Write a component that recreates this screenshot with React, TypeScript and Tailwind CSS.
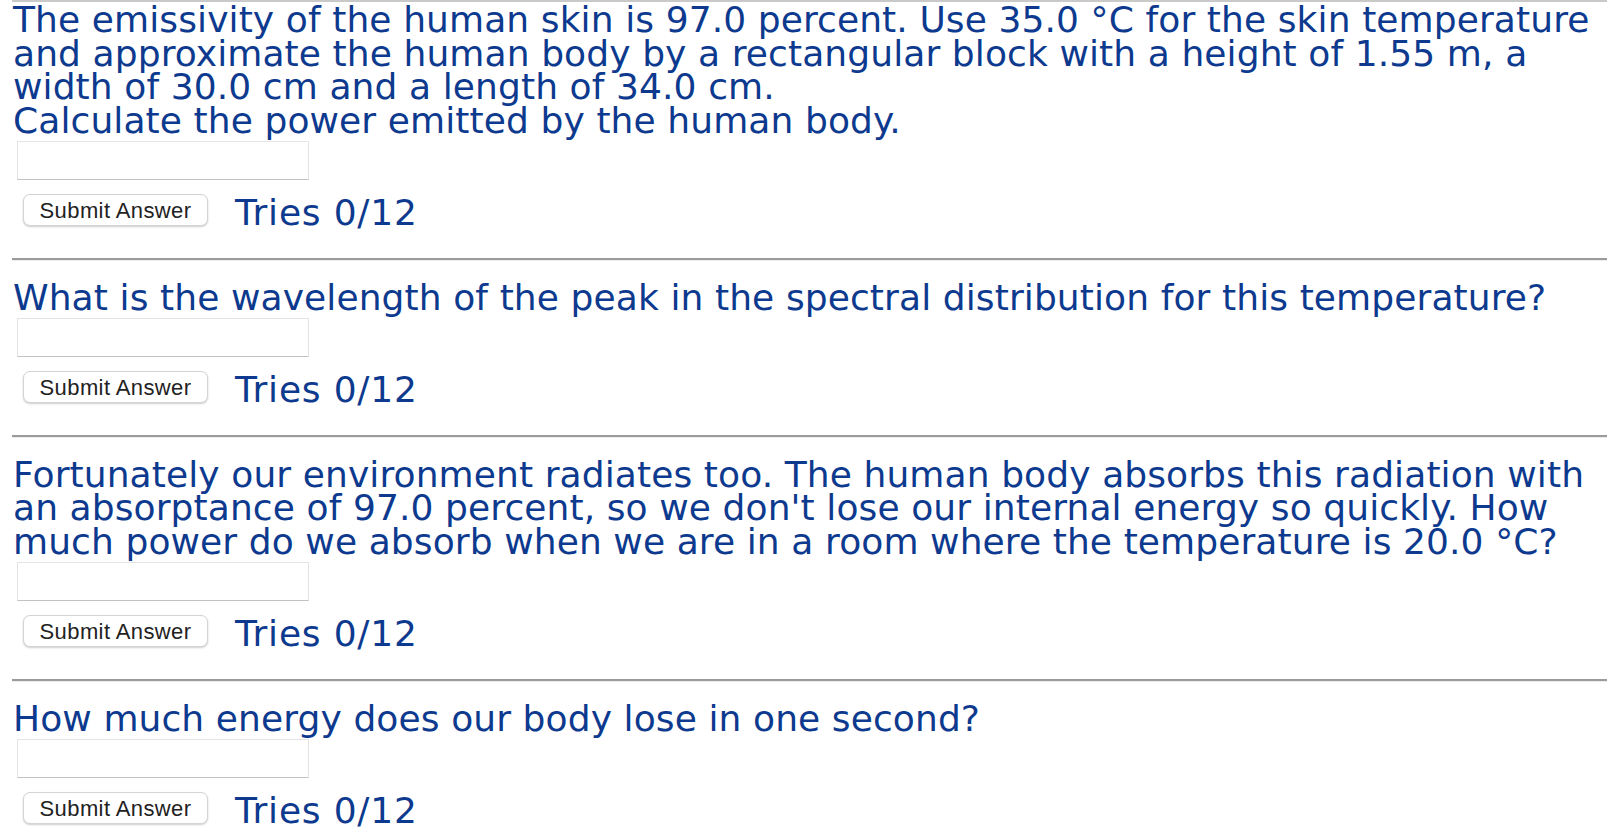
import React from 'react'

type Question = {
  lines: string[]
}

const questions: Question[] = [
  {
    lines: [
      'The emissivity of the human skin is 97.0 percent. Use 35.0 °C for the skin temperature',
      'and approximate the human body by a rectangular block with a height of 1.55 m, a',
      'width of 30.0 cm and a length of 34.0 cm.',
      'Calculate the power emitted by the human body.',
    ],
  },
  {
    lines: ['What is the wavelength of the peak in the spectral distribution for this temperature?'],
  },
  {
    lines: [
      'Fortunately our environment radiates too. The human body absorbs this radiation with',
      "an absorptance of 97.0 percent, so we don't lose our internal energy so quickly. How",
      'much power do we absorb when we are in a room where the temperature is 20.0 °C?',
    ],
  },
  {
    lines: ['How much energy does our body lose in one second?'],
  },
]

function Divider() {
  return <div className="h-[3px] border-t-2 border-[#9b9b9b] border-b border-b-[#ececec]" />
}

function QuestionBlock({ q, first }: { q: Question; first: boolean }) {
  return (
    <div className={first ? 'pt-[1px]' : 'pt-[20px]'}>
      {/* Question text */}
      <p className="pl-[1px] text-[36px] leading-[33.5px] tracking-[0.1px] text-[#0d3a8e] whitespace-nowrap">
        {q.lines.map((line, idx) => (
          <span key={idx} className="block">
            {line}
          </span>
        ))}
      </p>

      {/* Answer field */}
      <input
        type="text"
        className="block mt-[3.5px] ml-[5px] w-[292px] h-[39px] bg-white border border-[#e4e4e4] border-b-[#c2c2c2] outline-none px-2 text-[20px]"
      />

      {/* Submit row */}
      <div className="flex items-start mt-[14px] ml-[11px]">
        <button className="w-[185px] h-[32px] bg-white border border-[#d4d4d4] rounded-[7px] shadow-[0_1px_2px_rgba(0,0,0,0.2)] text-[22px] leading-none tracking-[0.4px] text-[#222] font-['Liberation_Sans',Arial,sans-serif] pt-[3px]">
          Submit Answer
        </button>
        <span className="ml-[27px] mt-[2px] text-[36px] leading-[33.5px] tracking-[0.8px] text-[#0d3a8e]">
          Tries 0/12
        </span>
      </div>

      <div className="mt-[28.5px]">
        <Divider />
      </div>
    </div>
  )
}

export default function App() {
  return (
    <div className="min-h-screen bg-white pl-[12px] pr-[7px] font-['DejaVu_Sans',Verdana,sans-serif]">
      <div className="h-[2px] bg-[#c9c9c9]" />
      {questions.map((q, idx) => (
        <QuestionBlock key={idx} q={q} first={idx === 0} />
      ))}
    </div>
  )
}
